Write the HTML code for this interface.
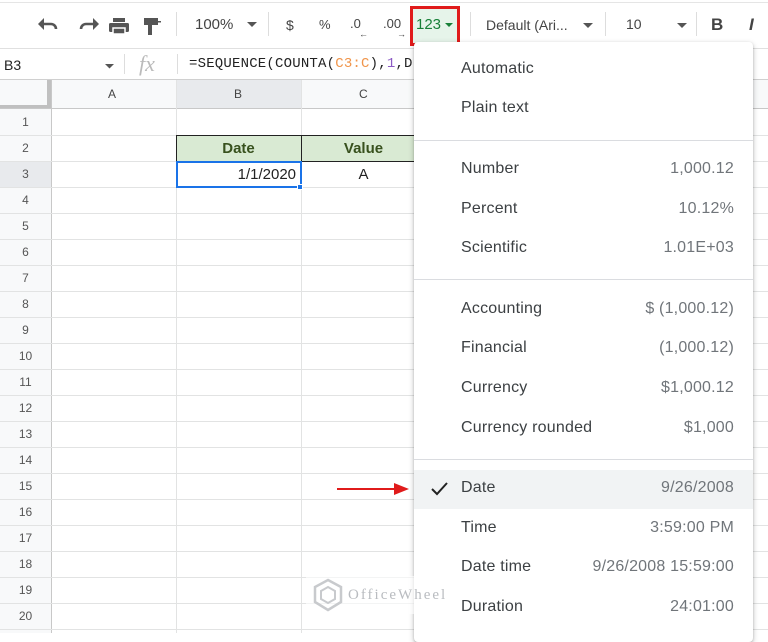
<!DOCTYPE html>
<html><head><style>
*{margin:0;padding:0;box-sizing:border-box}
body{width:768px;height:633px;overflow:hidden;background:#fff;font-family:"Liberation Sans",Arial,sans-serif;position:relative;color:#3c4043}
.a{position:absolute}
.tb{font-size:14px;color:#444}
.hl{position:absolute;left:0;width:768px;height:1px;background:#e2e3e3}
.vl{position:absolute;top:80px;width:1px;height:553px;background:#e2e3e3}
.rn{position:absolute;left:0;width:51px;text-align:center;font-size:12px;color:#555;height:26px;line-height:26px}
.mi{position:absolute;left:461px;font-size:16px;color:#3c4043;letter-spacing:.2px}
.mv{position:absolute;right:34px;font-size:16px;color:#70757a;text-align:right;letter-spacing:.2px}
.sep{position:absolute;left:414px;width:339px;height:1px;background:#dadce0}
</style></head><body>
<!-- toolbar -->
<div class="a" style="left:0;top:2px;width:768px;height:1px;background:#e5e5e5"></div>
<svg class="a" style="left:36px;top:14px" width="170" height="24" viewBox="0 0 170 24">
<path d="M6 10h9a5 5 0 0 1 5 5" fill="none" stroke="#555" stroke-width="2.6"/><path d="M2 10l6-6v12z" fill="#555"/>
<path d="M59 10h-9a5 5 0 0 0-5 5" fill="none" stroke="#555" stroke-width="2.6"/><path d="M63 10l-6-6v12z" fill="#555"/>
<rect x="77" y="4" width="12" height="4" fill="#555"/><rect x="73" y="9" width="20" height="9" rx="1.5" fill="#555"/><rect x="77" y="14" width="12" height="6" fill="#555" stroke="#fff" stroke-width="1.5"/>
<rect x="108" y="4" width="14" height="7" fill="#555"/><rect x="122" y="7" width="3" height="1.5" fill="#555"/><rect x="112" y="11" width="4" height="10" fill="#555"/>
</svg>
<div class="a" style="left:176px;top:12px;width:1px;height:24px;background:#ddd"></div>
<div class="a tb" style="left:195px;top:16px;font-size:15px">100%</div>
<svg class="a" style="left:247px;top:22px" width="10" height="6"><path d="M0 0h10L5 5z" fill="#555"/></svg>
<div class="a" style="left:268px;top:12px;width:1px;height:24px;background:#ddd"></div>
<div class="a tb" style="left:286px;top:17px">$</div>
<div class="a tb" style="left:319px;top:17px;font-size:13px">%</div>
<div class="a tb" style="left:350px;top:16px;font-size:13px">.0</div>
<div class="a" style="left:359px;top:29px;font-size:9px;color:#444">←</div>
<div class="a tb" style="left:383px;top:16px;font-size:13px">.00</div>
<div class="a" style="left:397px;top:29px;font-size:9px;color:#444">→</div>
<div class="a" style="left:410px;top:6px;width:50px;height:40px;border:3px solid #e01b1b;background:#e6f4ea"></div>
<div class="a" style="left:416px;top:16px;font-size:15px;color:#188038">123</div>
<svg class="a" style="left:445px;top:23px" width="8" height="5"><path d="M0 0h8L4 4z" fill="#188038"/></svg>
<div class="a" style="left:470px;top:12px;width:1px;height:24px;background:#ddd"></div>
<div class="a tb" style="left:486px;top:17px;font-size:14px">Default (Ari...</div>
<svg class="a" style="left:583px;top:23px" width="10" height="6"><path d="M0 0h10L5 5z" fill="#555"/></svg>
<div class="a" style="left:605px;top:12px;width:1px;height:24px;background:#ddd"></div>
<div class="a tb" style="left:626px;top:16px;font-size:14px">10</div>
<svg class="a" style="left:677px;top:23px" width="10" height="6"><path d="M0 0h10L5 5z" fill="#555"/></svg>
<div class="a" style="left:696px;top:12px;width:1px;height:24px;background:#ddd"></div>
<div class="a" style="left:711px;top:15px;font-size:17px;font-weight:bold;color:#444">B</div>
<div class="a" style="left:749px;top:15px;font-size:17px;font-style:italic;font-weight:bold;color:#444">I</div>
<!-- formula bar -->
<div class="a" style="left:0;top:48px;width:768px;height:1px;background:#e0e0e0"></div>
<div class="a" style="left:4px;top:57px;font-size:14px;color:#222">B3</div>
<svg class="a" style="left:105px;top:64px" width="9" height="5"><path d="M0 0h9L4.5 4.5z" fill="#555"/></svg>
<div class="a" style="left:124px;top:54px;width:1px;height:20px;background:#ddd"></div>
<div class="a" style="left:139px;top:51px;font-size:22px;font-family:'Liberation Serif',serif;font-style:italic;color:#bbb">fx</div>
<div class="a" style="left:177px;top:54px;width:1px;height:20px;background:#ddd"></div>
<div class="a" style="left:189px;top:56px;font-size:14px;font-family:'Liberation Mono',monospace;letter-spacing:.2px;color:#222">=SEQUENCE(COUNTA(<span style="color:#f0954b">C3:C</span>),<span style="color:#8c5bc4">1</span>,D</div>
<div class="a" style="left:0;top:79px;width:768px;height:1px;background:#d0d0d0"></div>
<!-- grid -->
<div class="a" style="left:0;top:80px;width:768px;height:29px;background:#f8f9fa"></div>
<div class="a" style="left:176px;top:80px;width:125px;height:29px;background:#e8eaed"></div>
<div class="a" style="left:0;top:109px;width:51px;height:524px;background:#f8f9fa"></div>
<div class="a" style="left:0;top:161px;width:51px;height:26px;background:#e8eaed"></div>
<div class="a" style="left:0;top:80px;width:51px;height:29px;border-right:4px solid #c0c0c0;border-bottom:4px solid #c0c0c0"></div>
<div class="hl" style="top:108px;background:#c8c8c8"></div>
<div class="vl" style="left:51px;background:#c8c8c8"></div>
<div class="vl" style="left:176px"></div><div class="vl" style="left:301px"></div><div class="vl" style="left:426px"></div>
<div class="hl" style="top:135px"></div><div class="hl" style="top:161px"></div><div class="hl" style="top:187px"></div><div class="hl" style="top:213px"></div><div class="hl" style="top:239px"></div><div class="hl" style="top:265px"></div><div class="hl" style="top:291px"></div><div class="hl" style="top:317px"></div><div class="hl" style="top:343px"></div><div class="hl" style="top:369px"></div><div class="hl" style="top:395px"></div><div class="hl" style="top:421px"></div><div class="hl" style="top:447px"></div><div class="hl" style="top:473px"></div><div class="hl" style="top:499px"></div><div class="hl" style="top:525px"></div><div class="hl" style="top:551px"></div><div class="hl" style="top:577px"></div><div class="hl" style="top:603px"></div><div class="hl" style="top:629px"></div>
<div class="a" style="left:108px;top:87px;font-size:12px;color:#444">A</div>
<div class="a" style="left:234px;top:87px;font-size:12px;color:#444">B</div>
<div class="a" style="left:359px;top:87px;font-size:12px;color:#444">C</div>
<div class="rn" style="top:109px">1</div><div class="rn" style="top:135px">2</div><div class="rn" style="top:161px">3</div><div class="rn" style="top:187px">4</div><div class="rn" style="top:213px">5</div><div class="rn" style="top:239px">6</div><div class="rn" style="top:265px">7</div><div class="rn" style="top:291px">8</div><div class="rn" style="top:317px">9</div><div class="rn" style="top:343px">10</div><div class="rn" style="top:369px">11</div><div class="rn" style="top:395px">12</div><div class="rn" style="top:421px">13</div><div class="rn" style="top:447px">14</div><div class="rn" style="top:473px">15</div><div class="rn" style="top:499px">16</div><div class="rn" style="top:525px">17</div><div class="rn" style="top:551px">18</div><div class="rn" style="top:577px">19</div><div class="rn" style="top:603px">20</div>
<div class="a" style="left:176px;top:135px;width:250px;height:27px;background:#d9ead3;border:1px solid #222"></div>
<div class="a" style="left:301px;top:135px;width:1px;height:27px;background:#222"></div>
<div class="a" style="left:176px;top:140px;width:125px;text-align:center;font-size:15px;font-weight:bold;color:#38511e">Date</div>
<div class="a" style="left:301px;top:140px;width:125px;text-align:center;font-size:15px;font-weight:bold;color:#38511e">Value</div>
<div class="a" style="left:176px;top:161px;width:126px;height:27px;border:2px solid #1a73e8"></div>
<div class="a" style="left:297px;top:184px;width:6px;height:6px;background:#1a73e8;border:1px solid #fff"></div>
<div class="a" style="left:176px;top:166px;width:120px;text-align:right;font-size:15px;color:#222">1/1/2020</div>
<div class="a" style="left:301px;top:166px;width:125px;text-align:center;font-size:15px;color:#222">A</div>
<!-- arrow -->
<div class="a" style="left:337px;top:488px;width:60px;height:2px;background:#e01b1b"></div>
<svg class="a" style="left:394px;top:483px" width="16" height="12"><path d="M0 0L15 6L0 12z" fill="#e01b1b"/></svg>
<!-- menu -->
<div class="a" style="left:414px;top:42px;width:339px;height:600px;background:#fff;box-shadow:0 2px 6px rgba(0,0,0,.25),0 1px 2px rgba(0,0,0,.15);border-radius:4px"></div>
<div class="mi" style="top:60px">Automatic</div>
<div class="mi" style="top:99px">Plain text</div>
<div class="sep" style="top:140px"></div>
<div class="mi" style="top:160px">Number</div><div class="mv" style="top:160px">1,000.12</div>
<div class="mi" style="top:200px">Percent</div><div class="mv" style="top:200px">10.12%</div>
<div class="mi" style="top:239px">Scientific</div><div class="mv" style="top:239px">1.01E+03</div>
<div class="sep" style="top:279px"></div>
<div class="mi" style="top:300px">Accounting</div><div class="mv" style="top:300px">$ (1,000.12)</div>
<div class="mi" style="top:339px">Financial</div><div class="mv" style="top:339px">(1,000.12)</div>
<div class="mi" style="top:379px">Currency</div><div class="mv" style="top:379px">$1,000.12</div>
<div class="mi" style="top:419px">Currency rounded</div><div class="mv" style="top:419px">$1,000</div>
<div class="sep" style="top:459px"></div>
<div class="a" style="left:414px;top:470px;width:339px;height:39px;background:#f1f3f4"></div>
<svg class="a" style="left:431px;top:482px" width="18" height="14"><path d="M1 7l5 5L16 1" fill="none" stroke="#222" stroke-width="2"/></svg>
<div class="mi" style="top:479px">Date</div><div class="mv" style="top:479px">9/26/2008</div>
<div class="mi" style="top:519px">Time</div><div class="mv" style="top:519px">3:59:00 PM</div>
<div class="mi" style="top:558px">Date time</div><div class="mv" style="top:558px">9/26/2008 15:59:00</div>
<div class="mi" style="top:598px">Duration</div><div class="mv" style="top:598px">24:01:00</div>
<!-- watermark -->
<div class="a" style="left:306px;top:576px;width:150px;height:38px;background:rgba(255,255,255,.6)"></div>
<svg class="a" style="left:312px;top:578px" width="32" height="34"><path d="M16 2L29 9v15l-13 8L3 24V9z" fill="none" stroke="#c8cacd" stroke-width="2.5"/><path d="M16 9l7 4v8l-7 4-7-4v-8z" fill="none" stroke="#c8cacd" stroke-width="2"/></svg>
<div class="a" style="left:348px;top:587px;font-size:15px;font-family:'Liberation Serif',serif;letter-spacing:2px;color:#b9bcc0">OfficeWheel</div>
</body></html>
